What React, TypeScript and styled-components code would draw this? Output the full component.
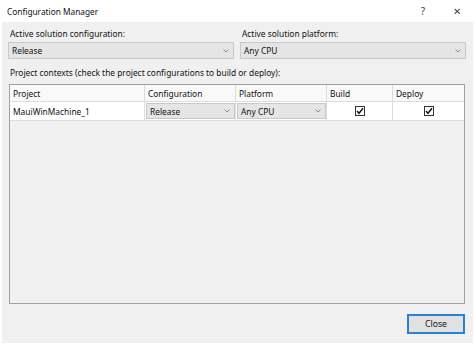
import styled, { createGlobalStyle } from 'styled-components'

const Global = createGlobalStyle`
  html, body { margin: 0; padding: 0; background: #ffffff; }
  body { font-family: "Noto Sans", "Open Sans", sans-serif; font-size: 8.4px; color: #111111; }
`

// column widths inside the grid box
const cols = [135, 91, 91, 66, 71]

const Window = styled.div`
  width: 474px;
  height: 346px;
  display: flex;
  flex-direction: column;
  background: #ffffff;
`

const TitleBar = styled.div`
  height: 22px;
  display: flex;
  align-items: center;
  padding: 0 0 0 7px;
`

const Title = styled.div`
  flex: 1;
  font-size: 8.3px;
`

const TitleButton = styled.div`
  width: 34px;
  text-align: center;
  color: #444;
  font-size: 10px;
`

const Body = styled.div`
  margin: 0 1px 0 2px;
  height: 321px;
  background: #f0f0f0;
  display: flex;
  flex-direction: column;
  padding: 4px 7px 0 6px;
  box-sizing: border-box;
`

const TopRow = styled.div`
  display: grid;
  grid-template-columns: 226px 226px;
  gap: 6px;
`

const Field = styled.div`
  display: flex;
  flex-direction: column;
`

const Label = styled.div`
  padding-left: 2px;
  height: 16px;
  line-height: 16px;
`

const Combo = styled.div<{ $h?: number }>`
  height: ${p => p.$h ?? 17}px;
  background: #e5e5e5;
  border: 1px solid #c8c8c8;
  display: flex;
  align-items: center;
  padding: 0 4px 0 3px;
  box-sizing: border-box;
`

const ComboText = styled.div`
  flex: 1;
  white-space: nowrap;
`

const Chevron = () => (
  <svg width="6" height="4" viewBox="0 0 6 4">
    <path d="M0.5 0.5 L3 3 L5.5 0.5" fill="none" stroke="#8a8a8a" strokeWidth="1" />
  </svg>
)

const ContextLabel = styled.div`
  margin-top: 6px;
  padding-left: 2px;
  height: 16px;
  line-height: 16px;
`

const GridBox = styled.div`
  margin-top: 3px;
  margin-left: 1px;
  width: 456px;
  height: 220px;
  border: 1px solid #a0a0a0;
  box-sizing: border-box;
  background: #f0f0f0;
  display: flex;
  flex-direction: column;
`

const GridRow = styled.div<{ $header?: boolean }>`
  display: grid;
  grid-template-columns: ${cols.map(c => c + 'px').join(' ')};
  height: ${p => (p.$header ? 16 : 18)}px;
  background: ${p => (p.$header ? '#f9f9f9' : '#ffffff')};
  border-bottom: 1px solid #dcdcdc;
`

const Cell = styled.div<{ $center?: boolean }>`
  display: flex;
  align-items: center;
  justify-content: ${p => (p.$center ? 'center' : 'flex-start')};
  padding: 0 3px;
  border-right: 1px solid #dcdcdc;
  white-space: nowrap;
  overflow: hidden;
  &:last-child { border-right: none; }
`

const ComboCell = styled.div`
  padding: 1px 0 0 1px;
  border-right: 1px solid #dcdcdc;
`

const CheckBox = styled.div`
  width: 10px;
  height: 10px;
  border: 1px solid #333;
  background: #fff;
  box-sizing: border-box;
  display: flex;
  align-items: center;
  justify-content: center;
`

const Check = () => (
  <CheckBox>
    <svg width="8" height="8" viewBox="0 0 8 8">
      <path d="M1 4 L3 6.3 L7 1.3" fill="none" stroke="#111" strokeWidth="1.4" />
    </svg>
  </CheckBox>
)

const Footer = styled.div`
  display: flex;
  justify-content: flex-end;
  padding-top: 10px;
`

const Button = styled.button`
  width: 58px;
  height: 20px;
  margin-right: 1px;
  background: #e1e1e1;
  border: 2px solid #2b7fd4;
  font-family: inherit;
  font-size: 8.6px;
  color: #111111;
  padding: 0;
`

export default function App() {
  return (
    <Window>
      <Global />
      <TitleBar>
        <Title>Configuration Manager</Title>
        <TitleButton>?</TitleButton>
        <TitleButton>✕</TitleButton>
      </TitleBar>
      <Body>
        <TopRow>
          <Field>
            <Label>Active solution configuration:</Label>
            <Combo>
              <ComboText>Release</ComboText>
              <Chevron />
            </Combo>
          </Field>
          <Field>
            <Label>Active solution platform:</Label>
            <Combo>
              <ComboText>Any CPU</ComboText>
              <Chevron />
            </Combo>
          </Field>
        </TopRow>
        <ContextLabel>Project contexts (check the project configurations to build or deploy):</ContextLabel>
        <GridBox>
          <GridRow $header>
            <Cell>Project</Cell>
            <Cell>Configuration</Cell>
            <Cell>Platform</Cell>
            <Cell>Build</Cell>
            <Cell>Deploy</Cell>
          </GridRow>
          <GridRow>
            <Cell>MauiWinMachine_1</Cell>
            <ComboCell>
              <Combo $h={16}>
                <ComboText>Release</ComboText>
                <Chevron />
              </Combo>
            </ComboCell>
            <ComboCell>
              <Combo $h={16}>
                <ComboText>Any CPU</ComboText>
                <Chevron />
              </Combo>
            </ComboCell>
            <Cell $center><Check /></Cell>
            <Cell $center><Check /></Cell>
          </GridRow>
        </GridBox>
        <Footer>
          <Button>Close</Button>
        </Footer>
      </Body>
    </Window>
  )
}
